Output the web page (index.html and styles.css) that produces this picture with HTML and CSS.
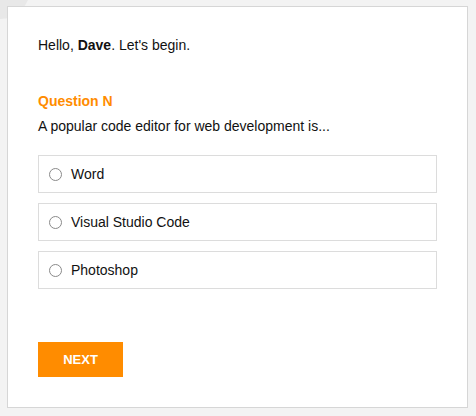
FILE: index.html
```html
<!DOCTYPE html>
<html lang="en">
<head>
<meta charset="utf-8">
<title>Quiz</title>
<link rel="stylesheet" href="styles.css">
</head>
<body>
<div class="blob"></div>
<div class="page">
  <div class="card">
    <p class="greeting">Hello, <strong>Dave</strong>. Let's begin.</p>
    <h2 class="q-title">Question N</h2>
    <p class="q-text">A popular code editor for web development is...</p>
    <div class="options">
      <label class="option"><span class="radio"></span><span class="label">Word</span></label>
      <label class="option"><span class="radio"></span><span class="label">Visual Studio Code</span></label>
      <label class="option"><span class="radio"></span><span class="label">Photoshop</span></label>
    </div>
    <button class="next">NEXT</button>
  </div>
</div>
</body>
</html>
```

FILE: styles.css
```css
html, body {
  margin: 0;
  padding: 0;
  background: #f3f3f3;
  font-family: "Liberation Sans", Arial, Helvetica, sans-serif;
  color: #111;
}
.blob {
  position: absolute;
  left: -30px;
  top: -41px;
  width: 60px;
  height: 60px;
  border-radius: 50%;
  background: #e8e8e8;
}
.page {
  position: relative;
  padding: 6px 0 0 7px;
}
.card {
  box-sizing: border-box;
  width: 461px;
  height: 402px;
  background: #fff;
  border: 1px solid #d6d6d6;
  padding: 30px;
  display: flex;
  flex-direction: column;
  align-items: flex-start;
}
.greeting {
  margin: 0;
  font-size: 14px;
  line-height: 16px;
}
.greeting strong { font-weight: bold; }
.q-title {
  margin: 40px 0 0;
  font-size: 14px;
  line-height: 16px;
  font-weight: bold;
  color: #ff8c00;
}
.q-text {
  margin: 9px 0 0;
  font-size: 14px;
  line-height: 16px;
}
.options {
  margin-top: 21px;
  align-self: stretch;
  display: flex;
  flex-direction: column;
  gap: 10px;
}
.option {
  display: flex;
  align-items: center;
  height: 38px;
  box-sizing: border-box;
  border: 1px solid #dcdcdc;
  padding: 0 10px;
  font-size: 14px;
  line-height: 16px;
}
.radio {
  box-sizing: border-box;
  width: 13px;
  height: 13px;
  border: 1px solid #8a8a8a;
  border-radius: 50%;
  background: #fff;
  margin-right: 9px;
  flex: none;
}
.next {
  margin-top: 53px;
  width: 85px;
  height: 35px;
  border: 0;
  padding: 0;
  background: #ff8c00;
  color: #fff;
  font-family: "Liberation Sans", Arial, sans-serif;
  font-weight: bold;
  font-size: 13px;
  cursor: pointer;
}
```
